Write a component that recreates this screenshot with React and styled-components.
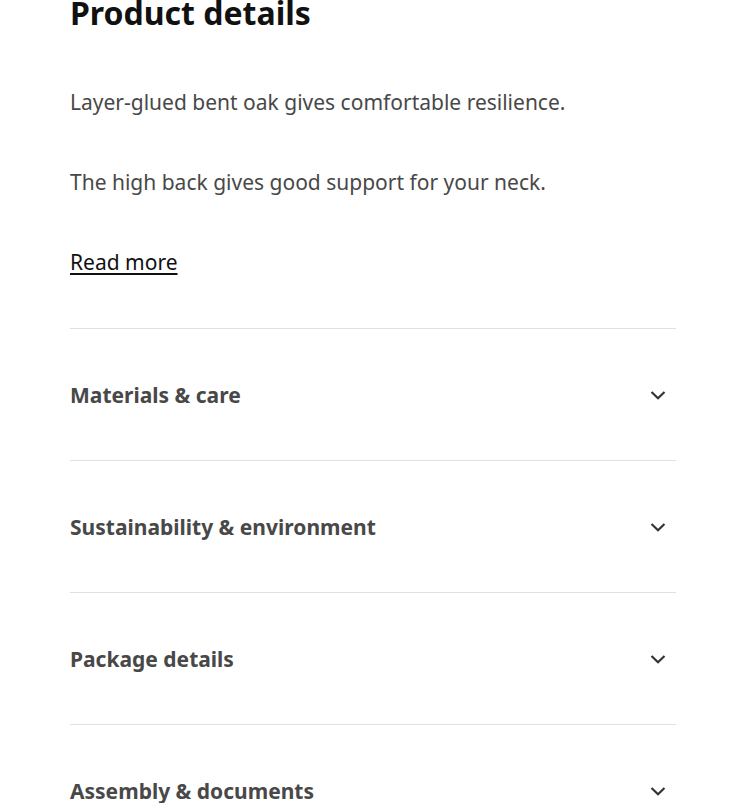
import React from 'react'
import styled, { createGlobalStyle } from 'styled-components'

const GlobalStyle = createGlobalStyle`
  body {
    margin: 0;
    background: #fff;
    font-family: "Noto Sans", "Open Sans", sans-serif;
  }
`

const sections = [
  'Materials & care',
  'Sustainability & environment',
  'Package details',
  'Assembly & documents',
]

function Chevron() {
  return (
    <svg width="16" height="16" viewBox="0 0 16 16" fill="none">
      <path d="M1.5 5 L8 11.2 L14.5 5" stroke="#333" strokeWidth="2.2" />
    </svg>
  )
}

export default function App() {
  return (
    <Page>
      <GlobalStyle />
      <Title>Product details</Title>
      <Intro>
        <Text>Layer-glued bent oak gives comfortable resilience.</Text>
        <Text>The high back gives good support for your neck.</Text>
        <ReadMore href="#">Read more</ReadMore>
      </Intro>
      <List>
        {sections.map((s) => (
          <Row key={s}>
            <RowTitle>{s}</RowTitle>
            <Chevron />
          </Row>
        ))}
      </List>
    </Page>
  )
}

const Page = styled.div`
  width: 606px;
  padding-left: 70px;
  height: 803px;
  overflow: hidden;
`

const Title = styled.h1`
  margin: -11px 0 0;
  font-size: 32px;
  line-height: 48px;
  font-weight: 700;
  color: #111;
`

const Intro = styled.div`
  display: flex;
  flex-direction: column;
  align-items: flex-start;
  gap: 48px;
  margin-top: 49px;
`

const Text = styled.p`
  margin: 0;
  font-size: 21px;
  line-height: 32px;
  color: #484848;
`

const ReadMore = styled.a`
  font-size: 21px;
  line-height: 32px;
  color: #111;
  text-decoration: underline;
  text-decoration-thickness: 1.5px;
  text-underline-offset: 3px;
`

const List = styled.div`
  margin-top: 50px;
`

const Row = styled.div`
  display: flex;
  align-items: center;
  justify-content: space-between;
  height: 131px;
  border-top: 1px solid #dfdfdf;
  padding-right: 10px;
`

const RowTitle = styled.span`
  font-size: 21px;
  font-weight: 700;
  color: #484848;
`
